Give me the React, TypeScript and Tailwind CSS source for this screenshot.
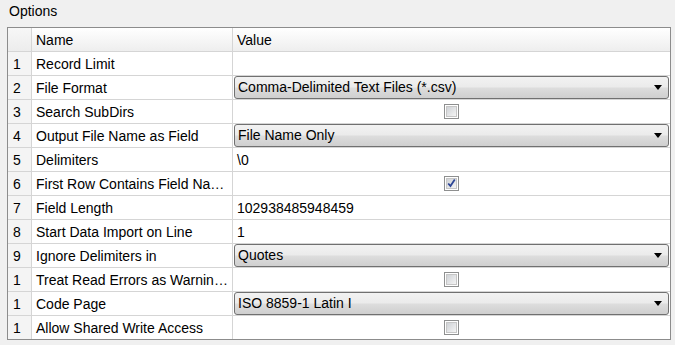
import React from "react";

type Row = {
  num: string;
  name: string;
  kind: "text" | "select" | "check";
  value?: string;
  checked?: boolean;
};

const rows: Row[] = [
  { num: "1", name: "Record Limit", kind: "text", value: "" },
  { num: "2", name: "File Format", kind: "select", value: "Comma-Delimited Text Files (*.csv)" },
  { num: "3", name: "Search SubDirs", kind: "check", checked: false },
  { num: "4", name: "Output File Name as Field", kind: "select", value: "File Name Only" },
  { num: "5", name: "Delimiters", kind: "text", value: "\\0" },
  { num: "6", name: "First Row Contains Field Na…", kind: "check", checked: true },
  { num: "7", name: "Field Length", kind: "text", value: "102938485948459" },
  { num: "8", name: "Start Data Import on Line", kind: "text", value: "1" },
  { num: "9", name: "Ignore Delimiters in", kind: "select", value: "Quotes" },
  { num: "1", name: "Treat Read Errors as Warnin…", kind: "check", checked: false },
  { num: "1", name: "Code Page", kind: "select", value: "ISO 8859-1 Latin I" },
  { num: "1", name: "Allow Shared Write Access", kind: "check", checked: false },
];

function Dropdown({ value }: { value: string }) {
  return (
    <div className="mx-px flex h-[23px] items-center justify-between rounded-[3px] border border-[#707070] bg-[linear-gradient(#f2f2f2_0%,#ebebeb_48%,#dddddd_52%,#cfcfcf_100%)] pl-[3px] pr-[6px]">
      <span className="whitespace-nowrap">{value}</span>
      <svg width="8" height="5" viewBox="0 0 8 5">
        <path d="M0 0H8L4 5Z" fill="#000" />
      </svg>
    </div>
  );
}

function Check({ checked }: { checked?: boolean }) {
  return (
    <div className="flex h-full items-center justify-center">
      <div className="flex h-[15px] w-[15px] items-center justify-center border border-[#8e8f8f] bg-white">
        <div className="flex h-[11px] w-[11px] items-center justify-center border border-[#c6c6c6] bg-[linear-gradient(135deg,#cfd2d6,#f4f4f4)]">
          {checked && (
            <svg width="11" height="11" viewBox="0 0 11 11">
              <path d="M1.5 5.5L4.2 8.5L9.5 0.5" stroke="#2c4596" strokeWidth="2.2" fill="none" />
            </svg>
          )}
        </div>
      </div>
    </div>
  );
}

export default function App() {
  return (
    <div
      className="h-[345px] w-[675px] overflow-hidden bg-[#f0f0f0] text-[14px] text-black"
      style={{ fontFamily: '"Liberation Sans", Arial, sans-serif' }}
    >
      <div className="h-[27px] pl-[9px] pt-[2px] leading-[18px]">Options</div>
      <div className="ml-[7px] w-[664px] border border-[#8c8c8c] bg-white">
        <div className="grid h-[24px] grid-cols-[24px_201px_1fr] border-b border-[#d5d5d5] bg-[linear-gradient(#ffffff,#eeeeee)]">
          <div className="border-r border-[#d5d5d5] bg-[linear-gradient(#f7f7f7,#ececec)]" />
          <div className="flex items-center border-r border-[#d5d5d5] pl-[4px] pt-px">Name</div>
          <div className="flex items-center pl-[4px] pt-px">Value</div>
        </div>
        {rows.map((r, i) => (
          <div
            key={i}
            className="grid h-[24px] grid-cols-[24px_201px_1fr] border-b border-[#d5d5d5] last:border-b-0 last:h-[23px]"
          >
            <div className="flex items-center border-r border-[#d5d5d5] bg-[#f4f4f4] pl-[5px] pt-px">{r.num}</div>
            <div className="flex items-center overflow-hidden whitespace-nowrap border-r border-[#d5d5d5] pl-[4px] pt-px">
              {r.name}
            </div>
            <div className="flex flex-col justify-center">
              {r.kind === "text" && <span className="pl-[4px] pt-px">{r.value}</span>}
              {r.kind === "select" && <Dropdown value={r.value ?? ""} />}
              {r.kind === "check" && <Check checked={r.checked} />}
            </div>
          </div>
        ))}
      </div>
    </div>
  );
}
